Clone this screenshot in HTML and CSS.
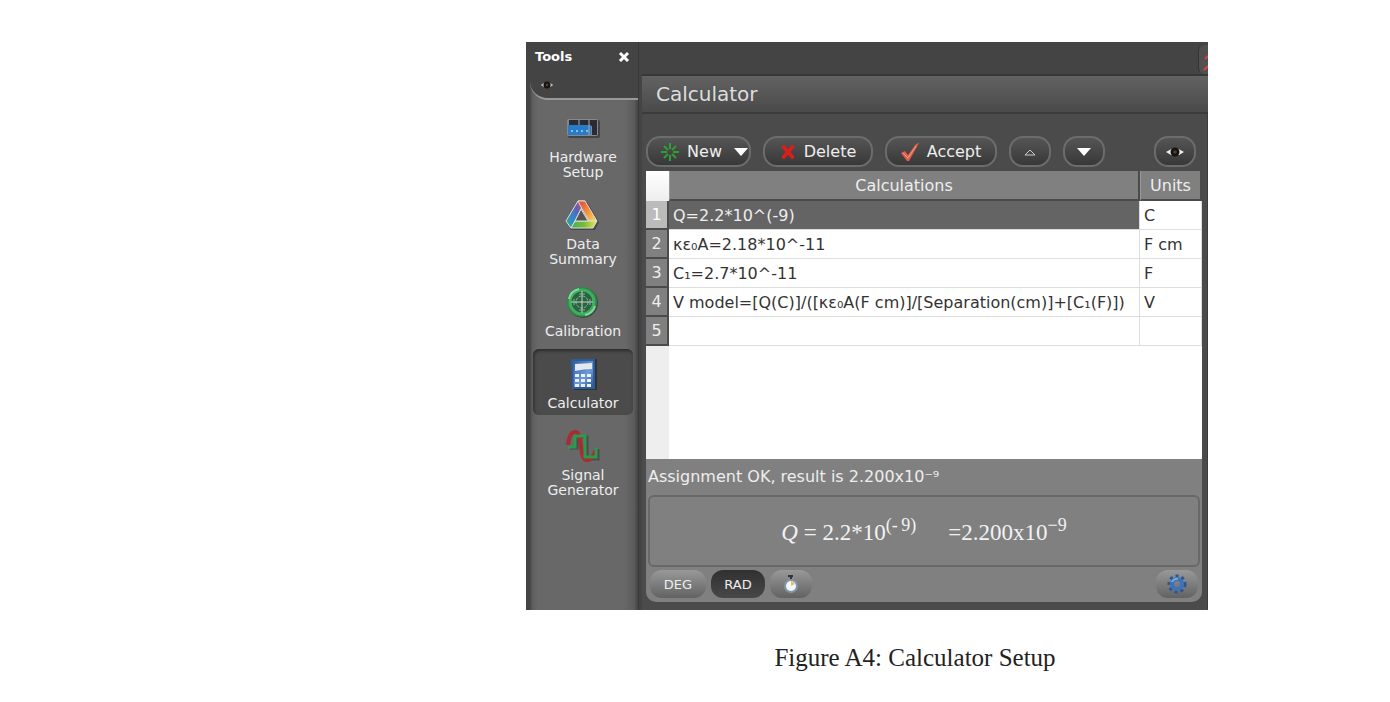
FILE: index.html
```html
<!DOCTYPE html>
<html lang="en">
<head>
    <meta charset="UTF-8">
    <title>Calculator Setup</title>
    <link rel="stylesheet" href="styles.css">
</head>
<body>
    <figure class="figure">
        <div class="app">
            <div class="side">
                <div class="side-head">
                    <div class="side-title">
                        <span>Tools</span>
                        <button type="button" class="close" aria-label="Close">
                            <svg width="12" height="12" viewBox="0 0 12 12"><path d="M2 2l8 8M10 2l-8 8" stroke="#fff" stroke-width="3"/></svg>
                        </button>
                    </div>
                    <svg class="eye" width="14" height="10" viewBox="0 0 20 12"><path d="M1 6Q10-2 19 6Q10 14 1 6z" fill="#bbb"/><circle cx="10" cy="6" r="5" fill="#171310"/><circle cx="10" cy="6" r="2" fill="#503b31"/></svg>
                </div>
                <nav class="tools">
                    <button type="button" class="tool">
                        <svg width="36" height="32" viewBox="0 0 36 32">
                            <rect x="3" y="8" width="32" height="18" rx="2" fill="#444"/>
                            <rect x="2" y="7" width="31" height="17" rx="2" fill="#888"/>
                            <rect x="4" y="8" width="28" height="6" fill="#292d33"/>
                            <path d="M3 13h23v10H3z" fill="#287cc7"/>
                            <path d="M27 8h5v15h-5z" fill="#292d33"/>
                            <path d="M14 8v5M24 8v15" stroke="#aaa"/>
                            <path d="M6 19h18" stroke="#7fc0f2" stroke-width="2" stroke-dasharray="2 3"/>
                        </svg>
                        <span>Hardware<br>Setup</span>
                    </button>
                    <button type="button" class="tool">
                        <svg width="36" height="32" viewBox="0 0 36 32">
                            <defs>
                                <linearGradient id="g1" x1="1" y1="0" x2="0" y2="1"><stop offset="0" stop-color="#e2555f"/><stop offset=".35" stop-color="#675db2"/><stop offset=".65" stop-color="#2e8ace"/><stop offset="1" stop-color="#37af67"/></linearGradient>
                                <linearGradient id="g2" x1="0" y1="0" x2="1" y2="1"><stop offset="0" stop-color="#dd4435"/><stop offset=".5" stop-color="#f58d3e"/><stop offset="1" stop-color="#f1e45b"/></linearGradient>
                                <linearGradient id="g3"><stop offset="0" stop-color="#42ad60"/><stop offset=".5" stop-color="#74bd34"/><stop offset="1" stop-color="#f1e45b"/></linearGradient>
                            </defs>
                            <path d="M15 3h7l12 20-4 8H6l-3-7z" fill="#484848"/>
                            <path d="M13 2h7L10 22l-4 7-5-7z" fill="url(#g1)" stroke="#ddd"/>
                            <path d="M13 2h7l12 20h-8L16 8z" fill="url(#g2)" stroke="#ddd"/>
                            <path d="M6 29l4-7h22l-4 7z" fill="url(#g3)" stroke="#ddd"/>
                            <path d="M16 10l7 12H10z" fill="#555" stroke="#ddd"/>
                        </svg>
                        <span>Data<br>Summary</span>
                    </button>
                    <button type="button" class="tool">
                        <svg width="36" height="32" viewBox="0 0 36 32">
                            <circle cx="18" cy="17" r="15" fill="#454545"/>
                            <circle cx="17" cy="16" r="15" fill="#278a47"/>
                            <circle cx="17" cy="16" r="12" fill="#296341" stroke="#3fae60" stroke-width="3"/>
                            <path d="M4 13A13 13 0 0 1 14 3M20 29A13 13 0 0 0 30 20" fill="none" stroke="#86d999" stroke-width="2"/>
                            <circle cx="17" cy="16" r="6" fill="none" stroke="#8fb49a" stroke-dasharray="3 1"/>
                            <path d="M17 5v22M6 16h22" stroke="#c7d9cb"/>
                            <path d="M14 8h6M14 24h6M9 13v6M25 13v6" stroke="#8fb49a"/>
                        </svg>
                        <span>Calibration</span>
                    </button>
                    <button type="button" class="tool active">
                        <svg width="36" height="32" viewBox="0 0 36 32">
                            <defs>
                                <linearGradient id="g4" x1="0" y1="0" x2="1" y2="1"><stop offset="0" stop-color="#2f5fa3"/><stop offset=".6" stop-color="#6f9bd6"/><stop offset="1" stop-color="#2d5796"/></linearGradient>
                            </defs>
                            <path d="M8 2l24-1v31H9z" fill="#2e3338"/>
                            <path d="M6 1h24v30H7z" fill="#2f5b9b"/>
                            <path d="M8 3h20v26H9z" fill="url(#g4)"/>
                            <path d="M10 6l17-1v6q-8 0-17 2z" fill="#e3e8ef"/>
                            <g fill="#e9f0fa">
                                <path d="M10 16h4v3h-4zM16 16h4v3h-4zM22 16h4v3h-4zM10 21h4v3h-4zM16 21h4v3h-4zM22 21h4v3h-4zM10 26h4v3h-4zM16 26h4v3h-4zM22 26h4v3h-4z"/>
                            </g>
                        </svg>
                        <span>Calculator</span>
                    </button>
                    <button type="button" class="tool">
                        <svg width="36" height="32" viewBox="0 0 36 32" fill="none">
                            <path d="M5 18h7V7h10v22h11V19" stroke="#4c4c4c" stroke-width="3"/>
                            <path d="M3 15C4 7 6 2 10 2C15 2 15 10 16 16C17 24 18 30 22 30C27 30 29 25 31 20" stroke="#a92a31" stroke-width="4"/>
                            <path d="M3 17h7V6h10v21h11v-9" stroke="#2b9a4d" stroke-width="3"/>
                        </svg>
                        <span>Signal<br>Generator</span>
                    </button>
                </nav>
            </div>
            <div class="main">
                <div class="strip">
                    <div class="corner"><svg width="7" height="28" viewBox="0 0 7 28"><path d="M4 14l3-3M3 25l4-4" stroke="#e5413b" stroke-width="2"/></svg></div>
                </div>
                <h1 class="title">Calculator</h1>
                <div class="content">
                    <div class="bar">
                        <button type="button" class="btn new">
                            <svg width="18" height="18" viewBox="0 0 18 18"><path d="M9 0v6M9 12v6M0 9h6M12 9h6M3 3l4 4M11 11l4 4M15 3l-4 4M7 11l-4 4" stroke="#2f9e35" stroke-width="2"/></svg>
                            <span>New</span>
                            <svg class="caret" width="14" height="8" viewBox="0 0 14 8"><path d="M0 0h14L7 8z" fill="#fff"/></svg>
                        </button>
                        <button type="button" class="btn delete">
                            <svg width="16" height="16" viewBox="0 0 18 18"><path d="M3 2l12 14M15 2L3 16" stroke="#d91f1b" stroke-width="4"/></svg>
                            <span>Delete</span>
                        </button>
                        <button type="button" class="btn accept">
                            <svg width="18" height="18" viewBox="0 0 18 18"><path d="M0 10l4-2 3 4L15 1l3-1L8 18H6z" fill="#e0604c"/><path d="M2 10l5 5L15 3" fill="none" stroke="#f59a83"/></svg>
                            <span>Accept</span>
                        </button>
                        <button type="button" class="btn small" aria-label="Move up">
                            <svg width="14" height="8" viewBox="0 0 14 8"><path d="M2 7h10L7 2z" fill="none" stroke="#ccc"/></svg>
                        </button>
                        <button type="button" class="btn small" aria-label="Move down">
                            <svg width="14" height="8" viewBox="0 0 14 8"><path d="M0 0h14L7 8z" fill="#fff"/></svg>
                        </button>
                        <button type="button" class="btn small view" aria-label="View">
                            <svg width="18" height="12" viewBox="0 0 20 12"><path d="M0 6Q10-2 20 6Q10 14 0 6z" fill="#eee"/><circle cx="10" cy="6" r="5" fill="#171310"/><circle cx="10" cy="6" r="2" fill="#503b31"/></svg>
                        </button>
                    </div>
                    <div class="sheet">
                        <table class="grid">
                            <thead>
                                <tr><td class="first"></td><th>Calculations</th><th class="units">Units</th></tr>
                            </thead>
                            <tbody>
                                <tr class="on"><th>1</th><td>Q=2.2*10^(-9)</td><td>C</td></tr>
                                <tr><th>2</th><td>κε₀A=2.18*10^-11</td><td>F cm</td></tr>
                                <tr><th>3</th><td>C₁=2.7*10^-11</td><td>F</td></tr>
                                <tr><th>4</th><td>V model=[Q(C)]/([κε₀A(F cm)]/[Separation(cm)]+[C₁(F)])</td><td>V</td></tr>
                                <tr><th>5</th><td></td><td></td></tr>
                            </tbody>
                        </table>
                    </div>
                    <div class="result">
                        <p class="status">Assignment OK, result is 2.200x10⁻⁹</p>
                        <div class="formula">
                            <span><i>Q</i> = 2.2*10<sup>(-&#8201;9)</sup></span>
                            <span>=2.200x10<sup>−9</sup></span>
                        </div>
                        <div class="foot">
                            <button type="button" class="pill deg">DEG</button>
                            <button type="button" class="pill rad">RAD</button>
                            <button type="button" class="pill" aria-label="Timer">
                                <svg width="18" height="20" viewBox="0 0 18 20"><path d="M6 2h5M9 2v3" stroke="#333" stroke-width="2"/><circle cx="9" cy="12" r="7" fill="#8096b0"/><circle cx="9" cy="12" r="5" fill="#f5f7f8"/><path d="M9 12V7a5 5 0 0 1 4 3z" fill="#dfc36b"/></svg>
                            </button>
                            <button type="button" class="pill gear" aria-label="Properties">
                                <svg width="20" height="20" viewBox="0 0 20 20"><circle cx="10" cy="10" r="8" fill="none" stroke="#2c5590" stroke-width="3" stroke-dasharray="3 3"/><circle cx="10" cy="10" r="5" fill="none" stroke="#3c72b8" stroke-width="4"/><path d="M5 8a5 5 0 0 1 6-3" fill="none" stroke="#7ba8dd" stroke-width="2"/></svg>
                            </button>
                        </div>
                    </div>
                </div>
            </div>
        </div>
        <figcaption class="caption">Figure A4: Calculator Setup</figcaption>
    </figure>
</body>
</html>
```
FILE: styles.css
```css
* {
    margin: 0;
    padding: 0;
    box-sizing: border-box;
}
body{
    background: #fff;
    font-family: "DejaVu Sans", sans-serif;
    font-size: 16px;
}
button{
    font-family: inherit;
    color: #eee;
    border: 0;
    background: none;
}
svg{
    display: block;
    flex-shrink: 0;
}
.figure{
    display: grid;
    grid-template-columns: 263fr 341fr 91fr;
    padding-top: 42px;
}
.app{
    grid-column: 2;
    display: flex;
    background: #444;
}
.side{
    width: 112px;
    flex-shrink: 0;
    padding-left: 4px;
    background: linear-gradient(to right, #444 4px, #5c5c5c 6px, #686868 12px, #686868 98px, #5c5c5c 108px, #444 112px);
}
.side-head{
    height: 58px;
    padding: 7px 8px 0 5px;
    background: #444;
    border-bottom: 2px solid #999;
    border-bottom-left-radius: 18px;
}
.side-title{
    display: flex;
    justify-content: space-between;
    align-items: center;
    color: #fff;
    font-size: 13px;
    font-weight: bold;
    line-height: 16px;
}
.side-head .eye{
    margin: 15px 0 0 5px;
}
.tools{
    display: flex;
    flex-direction: column;
    gap: 6px;
    padding: 3px 5px 0 3px;
}
.tool{
    display: flex;
    flex-direction: column;
    align-items: center;
    gap: 6px;
    padding: 9px 0 4px;
    font-size: 14px;
    line-height: 15px;
}
.tool.active{
    background: #4b4b4b;
    border-radius: 6px;
    box-shadow: inset 1px 2px 3px #2c2c2c;
}
.main{
    flex: 1;
    min-width: 0;
    padding-left: 3px;
    border-left: 1px solid #393939;
}
.strip{
    display: flex;
    justify-content: flex-end;
    height: 34px;
    padding-top: 3px;
    background: #444;
    border-bottom: 2px solid #383838;
}
.corner{
    width: 10px;
    padding-left: 2px;
    background: #505050;
    border-left: 1px solid #333;
    border-radius: 6px 0 0 6px;
}
.title{
    height: 38px;
    padding-left: 14px;
    color: #ddd;
    font-size: 20px;
    font-weight: normal;
    line-height: 36px;
    background: linear-gradient(#626262, #4a4a4a);
    border-bottom: 2px solid #3b3b3b;
}
.content{
    padding: 22px 5px 8px 4px;
    background: #4b4b4b;
    border-right: 1px solid #3c3c3c;
}
.bar{
    display: flex;
    gap: 12px;
    padding: 0 6px 4px 0;
}
.btn{
    display: flex;
    align-items: center;
    justify-content: center;
    gap: 8px;
    height: 31px;
    font-size: 16px;
    border: 2px solid #6c6c6c;
    border-radius: 14px;
    background: linear-gradient(#555, #383838);
}
.new{
    width: 105px;
    justify-content: flex-end;
    padding-right: 1px;
}
.new .caret{
    margin-left: 4px;
}
.delete{
    width: 110px;
}
.accept{
    width: 112px;
}
.small{
    width: 42px;
}
.view{
    margin-left: auto;
}
.sheet{
    height: 288px;
    background: linear-gradient(to right, #eee 23px, #fff 23px);
}
.grid{
    width: 100%;
    table-layout: fixed;
    border-collapse: separate;
    border-spacing: 0;
    color: #333;
}
.grid th{
    color: #eee;
    font-weight: normal;
    background: #808080;
    border-right: 2px solid #4b4b4b;
    border-bottom: 2px solid #4b4b4b;
}
.grid thead th{
    height: 30px;
    border-left: 1px solid #999;
}
.grid .first{
    width: 23px;
    background: linear-gradient(#fff, #eee);
}
.grid .units{
    width: 62px;
}
.grid tbody tr{
    height: 29px;
}
.grid tbody td{
    padding: 0 4px;
    white-space: nowrap;
    background: #fff;
    border-right: 1px solid #ddd;
    border-bottom: 1px solid #ddd;
}
.grid .on th{
    color: #fff;
    background: #bbb;
}
.grid .on th + td{
    color: #eee;
    background: #646464;
}
.result{
    padding: 0 2px 4px;
    background: #808080;
    border-radius: 0 0 10px 10px;
}
.status{
    color: #eee;
    line-height: 36px;
}
.formula{
    display: flex;
    justify-content: center;
    align-items: center;
    gap: 32px;
    height: 72px;
    padding-top: 3px;
    color: #f2f2f2;
    font-family: "Liberation Serif", serif;
    font-size: 23px;
    border: 2px solid #686868;
    border-radius: 6px;
}
.formula sup{
    font-size: 18px;
    line-height: 0;
}
.foot{
    display: flex;
    gap: 5px;
    padding: 3px 2px 0;
}
.pill{
    display: flex;
    align-items: center;
    justify-content: center;
    width: 42px;
    height: 28px;
    font-size: 13px;
    border-radius: 12px;
    background: linear-gradient(#999, #626262);
}
.deg{
    width: 56px;
}
.rad{
    width: 54px;
    background: linear-gradient(#303030, #484848);
}
.gear{
    margin-left: auto;
}
.caption{
    grid-column: 2;
    padding: 33px 0 0 96px;
    color: #222;
    font-family: "Liberation Serif", serif;
    font-size: 25px;
    line-height: 30px;
    text-align: center;
}
```
